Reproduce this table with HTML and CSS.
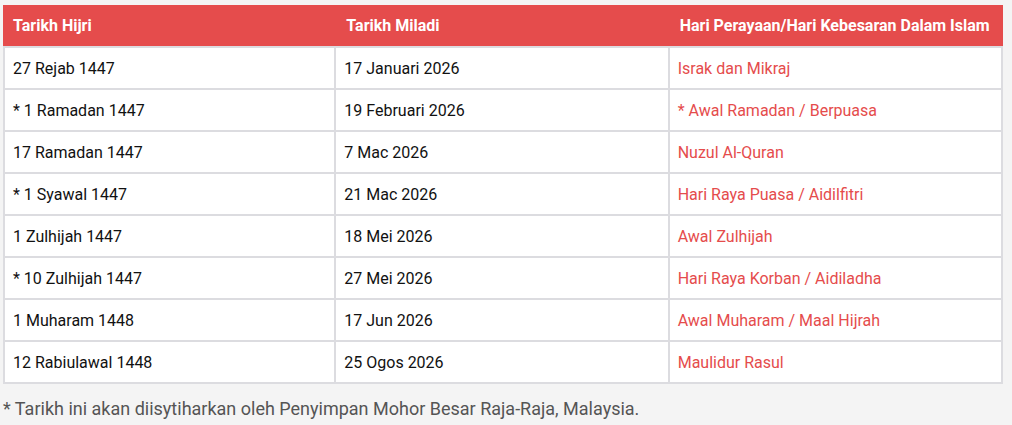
FILE: index.html
```html
<!DOCTYPE html>
<html lang="ms">
<head>
<meta charset="utf-8">
<link rel="stylesheet" href="styles.css">
</head>
<body>
<div class="wrap">
<table class="tbl">
<thead>
<tr><th>Tarikh Hijri</th><th>Tarikh Miladi</th><th>Hari Perayaan/Hari Kebesaran Dalam Islam</th></tr>
</thead>
<tbody>
<tr><td>27 Rejab 1447</td><td>17 Januari 2026</td><td class="ev">Israk dan Mikraj</td></tr>
<tr><td>* 1 Ramadan 1447</td><td>19 Februari 2026</td><td class="ev">* Awal Ramadan / Berpuasa</td></tr>
<tr><td>17 Ramadan 1447</td><td>7 Mac 2026</td><td class="ev">Nuzul Al-Quran</td></tr>
<tr><td>* 1 Syawal 1447</td><td>21 Mac 2026</td><td class="ev">Hari Raya Puasa / Aidilfitri</td></tr>
<tr><td>1 Zulhijah 1447</td><td>18 Mei 2026</td><td class="ev">Awal Zulhijah</td></tr>
<tr><td>* 10 Zulhijah 1447</td><td>27 Mei 2026</td><td class="ev">Hari Raya Korban / Aidiladha</td></tr>
<tr><td>1 Muharam 1448</td><td>17 Jun 2026</td><td class="ev">Awal Muharam / Maal Hijrah</td></tr>
<tr><td>12 Rabiulawal 1448</td><td>25 Ogos 2026</td><td class="ev">Maulidur Rasul</td></tr>
</tbody>
</table>
<p class="note">* Tarikh ini akan diisytiharkan oleh Penyimpan Mohor Besar Raja-Raja, Malaysia.</p>
</div>
</body>
</html>
```
FILE: styles.css
```css
html, body {
  margin: 0;
  padding: 0;
  background: #f4f4f4;
  font-family: Roboto, "Liberation Sans", Arial, sans-serif;
}
.wrap {
  padding: 5px 0 0 3px;
}
.tbl {
  width: 1000px;
  border-collapse: separate;
  border-spacing: 0;
  table-layout: fixed;
  background: #fff;
}
.tbl th {
  background: #e54c4c;
  color: #fff;
  font-weight: 700;
  font-size: 16px;
  text-align: left;
  height: 43px;
  padding: 0 0 0 10px;
  border-bottom: 2px solid #dcdce0;
  box-sizing: border-box;
}
.tbl td {
  height: 40px;
  font-size: 16px;
  color: #111;
  padding: 0 0 0 8px;
  border-right: 2px solid #dcdce0;
  border-bottom: 2px solid #dcdce0;
}
.tbl td:first-child {
  border-left: 2px solid #dcdce0;
}
.tbl td.ev {
  color: #e54c4c;
}
.note {
  margin: 14px 0 0 0;
  font-size: 18px;
  color: #555;
}
```
